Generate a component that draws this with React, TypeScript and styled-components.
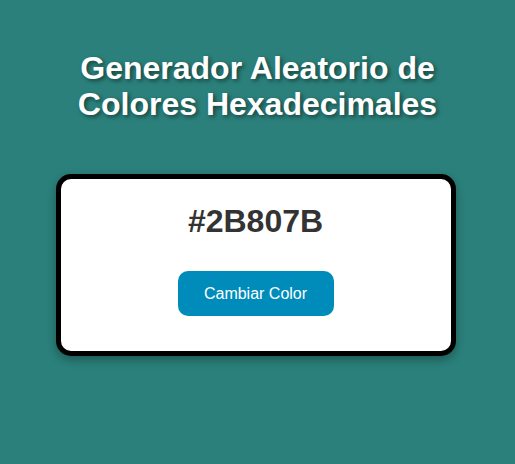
import styled, { createGlobalStyle } from "styled-components";

const GlobalStyle = createGlobalStyle`
  html, body {
    margin: 0;
    padding: 0;
  }
  body {
    background-color: #2b807b;
    font-family: "Liberation Sans", Arial, sans-serif;
    min-height: 100vh;
  }
`;

const Page = styled.main`
  display: flex;
  flex-direction: column;
  align-items: center;
  padding-top: 50px;
`;

const Title = styled.h1`
  margin: 0 0 52px;
  color: #ffffff;
  font-size: 32px;
  font-weight: 700;
  line-height: 36px;
  text-align: center;
  text-shadow: 2px 2px 4px rgba(0, 0, 0, 0.5);
`;

const Card = styled.section`
  box-sizing: border-box;
  width: 400px;
  height: 182px;
  margin-right: 4px;
  background: #ffffff;
  border: 5px solid #000000;
  border-radius: 15px;
  box-shadow: 0 4px 10px rgba(0, 0, 0, 0.3);
  display: flex;
  flex-direction: column;
  align-items: center;
  padding-top: 24px;
`;

const HexCode = styled.h2`
  margin: 0 0 31px;
  color: #333333;
  font-size: 32px;
  font-weight: 700;
  line-height: 37px;
`;

const Button = styled.button`
  width: 156px;
  height: 45px;
  border: none;
  border-radius: 10px;
  background-color: #008cba;
  color: #ffffff;
  font-family: "Liberation Sans", Arial, sans-serif;
  font-size: 16px;
  cursor: pointer;
`;

export default function App() {
  return (
    <>
      <GlobalStyle />
      <Page>
        <Title>
          Generador Aleatorio de
          <br />
          Colores Hexadecimales
        </Title>
        <Card>
          <HexCode>#2B807B</HexCode>
          <Button>Cambiar Color</Button>
        </Card>
      </Page>
    </>
  );
}
